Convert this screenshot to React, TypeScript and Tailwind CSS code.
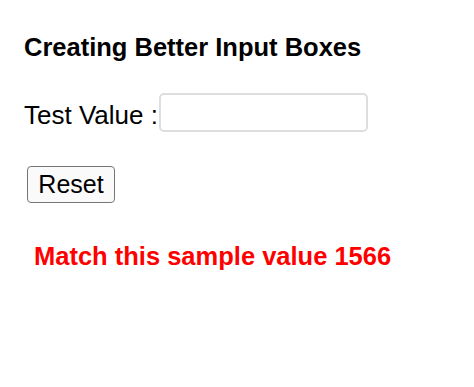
import React, { useState } from 'react';

const SAMPLE = 1566;

export default function App() {
    const [value, setValue] = useState('');

    return (
        <div className="min-h-screen bg-white px-6 pt-[30px] font-['Liberation_Sans',Arial,sans-serif] text-black">
            <h1 className="text-[25.5px] font-bold leading-[34px]">Creating Better Input Boxes</h1>

            <div className="mt-[28px] flex items-start">
                <label htmlFor="test-value" className="pt-[3px] text-[26px] leading-[40px]">Test Value :</label>
                <input
                    id="test-value"
                    value={value}
                    onChange={(e) => setValue(e.target.value)}
                    className="ml-px mt-px h-[39px] w-[209px] rounded-[5px] border-2 border-[#dedede] bg-white px-2 text-[20px] outline-none"
                />
            </div>

            <button
                onClick={() => setValue('')}
                className="ml-[3px] mt-[31px] h-[37px] w-[88px] rounded-[4px] border border-[#767676] bg-[#fafafa] text-[25px] leading-none"
            >
                Reset
            </button>

            {/* sample hint */}
            <p className="ml-[10px] mt-[36px] text-[25.5px] font-bold leading-[34px] text-[#ff0000]">
                Match this sample value {SAMPLE}
            </p>
        </div>
    );
}
